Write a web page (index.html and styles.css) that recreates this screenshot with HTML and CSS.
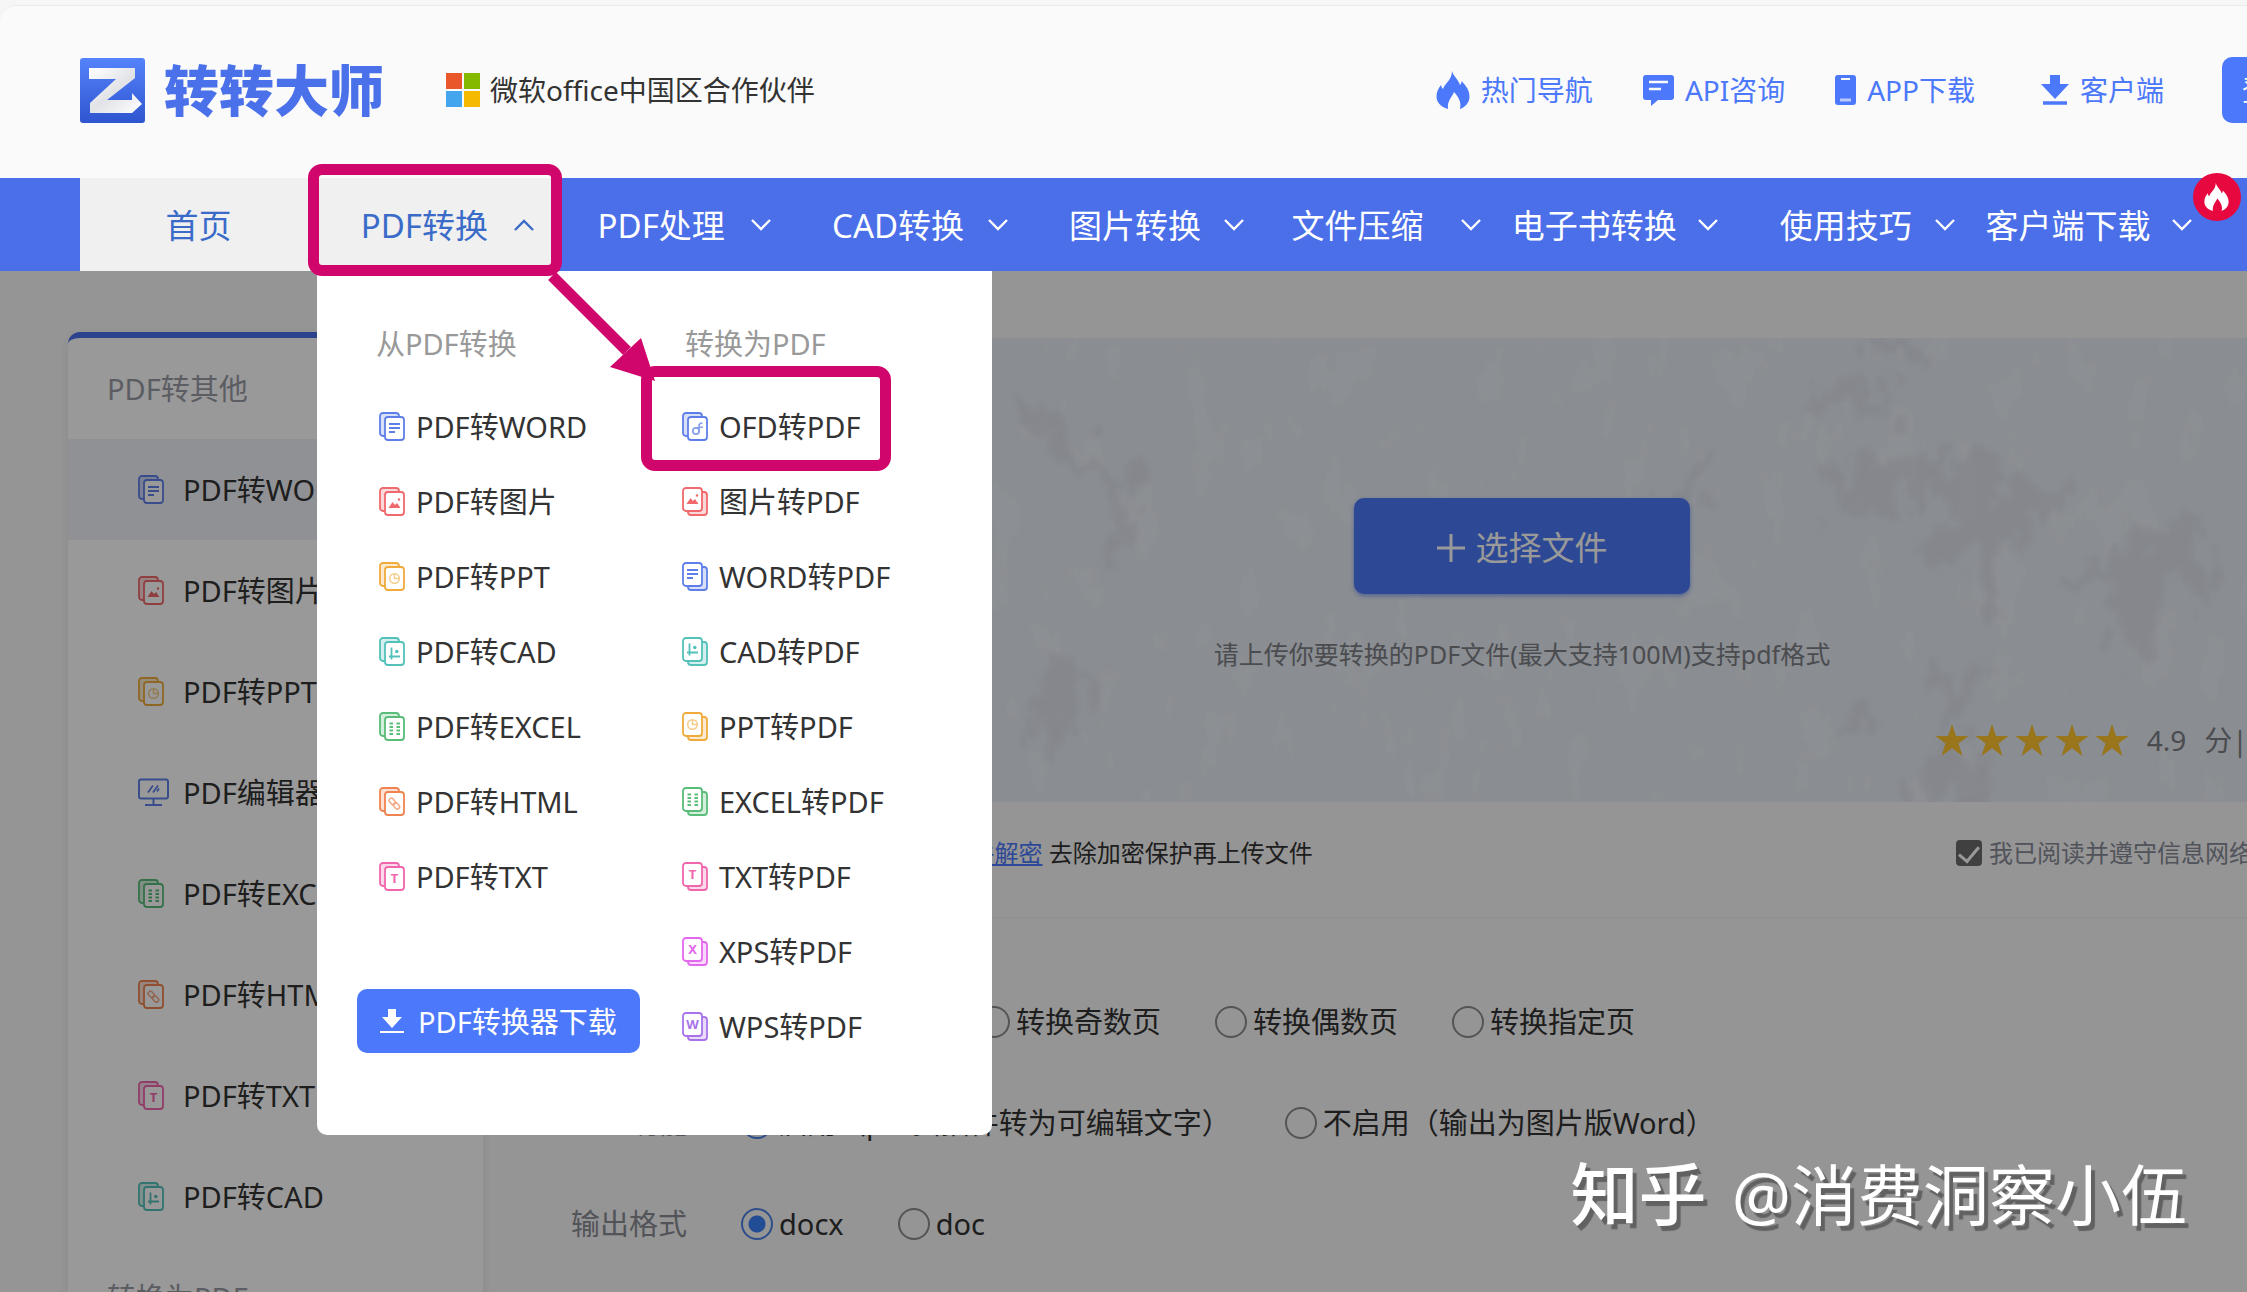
FILE: index.html
```html
<!DOCTYPE html>
<html lang="zh-CN">
<head>
    <meta charset="UTF-8">
    <meta name="viewport" content="width=device-width, initial-scale=1.0">
    <title>转转大师 - PDF转换</title>
    <link rel="stylesheet" href="styles.css">
</head>
<body>
    <!-- shared icon shapes -->
    <svg class="sprite" aria-hidden="true">
        <defs>
            <linearGradient id="logo-bg" x1="0" y1="0" x2="0" y2="1">
                <stop offset="0" stop-color="#5583fb"/>
                <stop offset="1" stop-color="#2e55cf"/>
            </linearGradient>
            <linearGradient id="logo-z" x1="0" y1="0" x2="1" y2="1">
                <stop offset="0" stop-color="#fff"/>
                <stop offset=".5" stop-color="#e2e3e7"/>
                <stop offset="1" stop-color="#fff"/>
            </linearGradient>
        </defs>
        <symbol id="page-from" viewBox="0 0 26 29">
            <rect x="1" y="1" width="19" height="23" rx="3" fill="currentColor" fill-opacity=".25" stroke="currentColor" stroke-width="1.8"/>
            <rect x="6" y="5" width="19" height="23" rx="3" fill="#fff" stroke="currentColor" stroke-width="1.8"/>
        </symbol>
        <symbol id="page-to" viewBox="0 0 26 29">
            <rect x="6" y="5" width="19" height="23" rx="3" fill="currentColor" fill-opacity=".25" stroke="currentColor" stroke-width="1.8"/>
            <rect x="1" y="1" width="19" height="23" rx="3" fill="#fff" stroke="currentColor" stroke-width="1.8"/>
        </symbol>
        <g id="g-word" stroke="currentColor" stroke-width="1.800"><path d="M10 12h11M10 16h11M10 20h6"/></g>
        <g id="g-image" fill="currentColor"><path d="M9.500 21l4-6 2.500 3 2-2 3.500 5z"/><circle cx="20" cy="12.500" r="1.200"/></g>
        <g id="g-ppt" fill="none" stroke="currentColor" stroke-width="1.500" opacity=".6"><circle cx="15.500" cy="16.500" r="4.800"/><path d="M15.500 12v4.500h4.500"/></g>
        <g id="g-cad" fill="none" stroke="currentColor" stroke-width="1.800"><path d="M12.500 10.500v12M10 19.500h11"/><circle cx="17.800" cy="14.500" r="1.800" fill="currentColor" stroke="none"/></g>
        <g id="g-excel" stroke="currentColor" stroke-width="1.800"><path d="M10.500 11.500h3.500M17.500 11.500h3.500M10.500 15h3.500M17.500 15h3.500M10.500 18.500h3.500M17.500 18.500h3.500M10.500 22h3.500M17.500 22h3.500"/></g>
        <g id="g-html" fill="none" stroke="currentColor" stroke-width="1.500" opacity=".7"><rect x="-3.500" y="-2" width="7" height="4.400" rx="2" transform="translate(13.400 14.300) rotate(48)"/><rect x="-3.500" y="-2" width="7" height="4.400" rx="2" transform="translate(17.600 18.800) rotate(48)"/></g>
        <g id="g-ofd" fill="none" stroke="currentColor" stroke-width="1.700" opacity=".75"><circle cx="14" cy="19" r="3.200"/><path d="M17 20v-6q0-3 3.500-3M14 16l7-1"/></g>
        <symbol id="chevron" viewBox="0 0 22 14"><path d="M2 2l9 9 9-9" fill="none" stroke="currentColor" stroke-width="2.400"/></symbol>
        <symbol id="flame" viewBox="0 0 34 38"><path d="M16 0c1 5 7 9 8 14 1-1 1.500-2 1.500-4 5 5 8 10 8 15.500 0 6-4 10.500-9.500 12.500 1.500-6-1-12-6-17-1 4-7 8-6 17C4.500 36 .5 31 .5 25.500c0-5 2-8 4.500-11.500.5 2 1 3 2 4C9 12 16 9 16 0z" fill="currentColor"/></symbol>
        <symbol id="star" viewBox="0 0 34 32"><path d="M17 0l4 12h12.500l-10 7.500L27.500 32 17 24.300 6.500 32l4-12.500L.5 12H13z" fill="currentColor"/></symbol>
    </svg>

    <div class="app">
        <header class="header">
            <a class="logo" href="#">
                <svg class="logo-mark" viewBox="0 0 65 65">
                    <rect width="65" height="65" rx="3" fill="url(#logo-bg)"/>
                    <path d="M9 10h46v10L27 42h25v-7l10 11-10 9H10V45l26-24H9z" fill="url(#logo-z)"/>
                </svg>
                <span>转转大师</span>
            </a>
            <div class="partner">
                <svg class="ms-mark" viewBox="0 0 34 34">
                    <path fill="#e8562a" d="M0 0h16v16H0z"/>
                    <path fill="#84b900" d="M18 0h16v16H18z"/>
                    <path fill="#43a5ee" d="M0 18h16v16H0z"/>
                    <path fill="#f4b900" d="M18 18h16v16H18z"/>
                </svg>
                <span>微软office中国区合作伙伴</span>
            </div>
            <div class="quick-links">
                <a href="#"><svg width="34" height="38"><use href="#flame"/></svg>热门导航</a>
                <a href="#">
                    <svg width="31" height="31" viewBox="0 0 31 31"><path d="M3 0h25q3 0 3 3v19q0 3-3 3H15l-7 6v-6H3q-3 0-3-3V3q0-3 3-3z" fill="currentColor"/><path d="M6 7h19M6 14h12" stroke="#fafafa" stroke-width="2.500"/></svg>API咨询
                </a>
                <a href="#">
                    <svg width="21" height="30" viewBox="0 0 21 30"><rect width="21" height="30" rx="3" fill="currentColor"/><path d="M6 4h9" stroke="#fafafa" stroke-width="2"/><path d="M5 25h11" stroke="#b9c9fb" stroke-width="3"/></svg>APP下载
                </a>
                <a class="client-link" href="#">
                    <svg width="28" height="30" viewBox="0 0 28 30"><path d="M9 0h10v9h9L14 24 0 9h9z" fill="currentColor"/><path d="M2 28h24" stroke="currentColor" stroke-width="3.500"/></svg>客户端
                </a>
                <button class="login" type="button">登录/注册</button>
            </div>
        </header>

        <nav class="nav">
            <a class="nav-item home" href="#">首页</a>
            <div class="nav-item open">
                <a href="#">PDF转换</a>
                <svg class="chevron up"><use href="#chevron"/></svg>
                <div class="menu">
                    <div class="menu-col">
                        <h3>从PDF转换</h3>
                        <a href="#"><svg class="doc blue"><use href="#page-from"/><use href="#g-word"/></svg>PDF转WORD</a>
                        <a href="#"><svg class="doc red"><use href="#page-from"/><use href="#g-image"/></svg>PDF转图片</a>
                        <a href="#"><svg class="doc amber"><use href="#page-from"/><use href="#g-ppt"/></svg>PDF转PPT</a>
                        <a href="#"><svg class="doc teal"><use href="#page-from"/><use href="#g-cad"/></svg>PDF转CAD</a>
                        <a href="#"><svg class="doc green"><use href="#page-from"/><use href="#g-excel"/></svg>PDF转EXCEL</a>
                        <a href="#"><svg class="doc orange"><use href="#page-from"/><use href="#g-html"/></svg>PDF转HTML</a>
                        <a href="#"><svg class="doc pink"><use href="#page-from"/><text class="glyph" x="15.500" y="21">T</text></svg>PDF转TXT</a>
                        <button class="download" type="button">
                            <svg width="24" height="25" viewBox="0 0 24 25"><path d="M8 0h8v8h6L12 19 2 8h6z" fill="#fff"/><path d="M0 23h24" stroke="#fff" stroke-width="2"/></svg>PDF转换器下载
                        </button>
                    </div>
                    <div class="menu-col to">
                        <h3>转换为PDF</h3>
                        <a class="marked" href="#"><svg class="doc blue"><use href="#page-from"/><use href="#g-ofd"/></svg>OFD转PDF</a>
                        <a href="#"><svg class="doc red"><use href="#page-to"/><use href="#g-image" x="-5" y="-4"/></svg>图片转PDF</a>
                        <a href="#"><svg class="doc blue"><use href="#page-to"/><use href="#g-word" x="-5" y="-4"/></svg>WORD转PDF</a>
                        <a href="#"><svg class="doc teal"><use href="#page-to"/><use href="#g-cad" x="-5" y="-4"/></svg>CAD转PDF</a>
                        <a href="#"><svg class="doc amber"><use href="#page-to"/><use href="#g-ppt" x="-5" y="-4"/></svg>PPT转PDF</a>
                        <a href="#"><svg class="doc green"><use href="#page-to"/><use href="#g-excel" x="-5" y="-4"/></svg>EXCEL转PDF</a>
                        <a href="#"><svg class="doc pink"><use href="#page-to"/><text class="glyph" x="10.500" y="17">T</text></svg>TXT转PDF</a>
                        <a href="#"><svg class="doc magenta"><use href="#page-to"/><text class="glyph" x="10.500" y="17">X</text></svg>XPS转PDF</a>
                        <a href="#"><svg class="doc purple"><use href="#page-to"/><text class="glyph" x="10.500" y="17">W</text></svg>WPS转PDF</a>
                    </div>
                    <svg class="arrow" viewBox="0 0 112 112">
                        <path d="M5 5l75 75" stroke="#d1066c" stroke-width="11"/>
                        <path d="M108 110L63 96l31-29z" fill="#d1066c"/>
                    </svg>
                </div>
            </div>
            <div class="nav-item"><a href="#">PDF处理</a><svg class="chevron"><use href="#chevron"/></svg></div>
            <div class="nav-item"><a href="#">CAD转换</a><svg class="chevron"><use href="#chevron"/></svg></div>
            <div class="nav-item"><a href="#">图片转换</a><svg class="chevron"><use href="#chevron"/></svg></div>
            <div class="nav-item tight"><a href="#">文件压缩</a><svg class="chevron"><use href="#chevron"/></svg></div>
            <div class="nav-item tight"><a href="#">电子书转换</a><svg class="chevron"><use href="#chevron"/></svg></div>
            <div class="nav-item"><a href="#">使用技巧</a><svg class="chevron"><use href="#chevron"/></svg></div>
            <div class="nav-item tight">
                <a href="#">客户端下载</a><svg class="chevron"><use href="#chevron"/></svg>
                <span class="hot"><svg width="25" height="28"><use href="#flame"/></svg></span>
            </div>
        </nav>

        <main class="main">
            <aside class="sidebar">
                <h2>PDF转其他</h2>
                <a class="active" href="#"><svg class="doc blue"><use href="#page-from"/><use href="#g-word"/></svg>PDF转WORD</a>
                <a href="#"><svg class="doc red"><use href="#page-from"/><use href="#g-image"/></svg>PDF转图片</a>
                <a href="#"><svg class="doc amber"><use href="#page-from"/><use href="#g-ppt"/></svg>PDF转PPT</a>
                <a href="#"><svg class="doc blue" viewBox="0 0 31 28"><path d="M3 1h25q2 0 2 2v15q0 2-2 2H3q-2 0-2-2V3q0-2 2-2zM15.500 20v6M7 26.500h17" fill="none" stroke="currentColor" stroke-width="2"/><path d="M10 14l5-7M15 14l5-7M19 13l2-3" stroke="currentColor" stroke-width="1.800"/></svg>PDF编辑器</a>
                <a href="#"><svg class="doc green"><use href="#page-from"/><use href="#g-excel"/></svg>PDF转EXCEL</a>
                <a href="#"><svg class="doc orange"><use href="#page-from"/><use href="#g-html"/></svg>PDF转HTML</a>
                <a href="#"><svg class="doc pink"><use href="#page-from"/><text class="glyph" x="15.500" y="21">T</text></svg>PDF转TXT</a>
                <a href="#"><svg class="doc teal"><use href="#page-from"/><use href="#g-cad"/></svg>PDF转CAD</a>
                <h2>转换为PDF</h2>
            </aside>

            <section class="panel">
                <div class="upload">
                    <!-- brushed paint marks behind the upload button -->
                    <svg class="texture" aria-hidden="true">
                        <filter id="rough" x="-10%" y="-10%" width="120%" height="120%">
                            <feTurbulence type="fractalNoise" baseFrequency=".04 .02" numOctaves="5" seed="4"/>
                            <feDisplacementMap in="SourceGraphic" scale="90" xChannelSelector="R" yChannelSelector="G"/>
                            <feGaussianBlur stdDeviation="2"/>
                        </filter>
                        <filter id="specks" x="0" y="0" width="100%" height="100%">
                            <feTurbulence type="fractalNoise" baseFrequency=".03 .014" numOctaves="5" seed="11"/>
                            <feColorMatrix values="0 0 0 0 .85  0 0 0 0 .88  0 0 0 0 .93  12 0 0 0 -7.200"/>
                        </filter>
                        <rect width="100%" height="100%" filter="url(#specks)" opacity=".6"/>
                        <g fill="#dce0ea" filter="url(#rough)" opacity=".75">
                            <path d="M1325 48h80l10 30 -20 12 -10 -18 -60 -2z"/>
                            <path d="M1365 5h60v28h-50z"/>
                            <path d="M1380 118h125l10 22 65 12 -12 40 -40 6 -10 40 -15 40 -20 -44 -50 -10 -8 -30 50 -10 0 -20 -60 -8 -30 10 -36 6 -10 -36z"/>
                            <path d="M1560 225h60l30 -40h60l20 40 -5 60 -20 -40 -30 10 -20 80 -10 -10 -30 -40 15 -40 -60 0z"/>
                            <path d="M1450 335h30l-5 60 -20 10zM1430 415h80l-10 50h-70z"/>
                            <path d="M1190 130h30l-8 40h-34zM1345 370h40v20h-36z"/>
                            <path d="M530 60h30l50 60 40 30 -10 70 -20 -10 -10 -70 -60 -40z"/>
                            <path d="M540 330h60l-10 40 -20 60 -20 -10 10 -60z"/>
                        </g>
                    </svg>
                    <button class="choose" type="button">
                        <svg width="28" height="28" viewBox="0 0 28 28"><path d="M14 0v28M0 14h28" stroke="currentColor" stroke-width="3"/></svg>选择文件
                    </button>
                    <p class="hint">请上传你要转换的PDF文件(最大支持100M)支持pdf格式</p>
                    <div class="rating">
                        <span class="stars">
                            <svg><use href="#star"/></svg>
                            <svg><use href="#star"/></svg>
                            <svg><use href="#star"/></svg>
                            <svg><use href="#star"/></svg>
                            <svg><use href="#star"/></svg>
                        </span>
                        <span>4.9</span>
                        <span>分| 评分</span>
                    </div>
                </div>
                <div class="notice">
                    <p>如上传的PDF文件已加密，请先使用<a href="#">文件解密</a> 去除加密保护再上传文件</p>
                    <label class="agree"><input type="checkbox" checked>我已阅读并遵守信息网络传输协议</label>
                </div>
                <form class="options">
                    <div class="option-row">
                        <span class="option-name">转换页码</span>
                        <label><input type="radio" name="pages" checked>转换所有页</label>
                        <label><input type="radio" name="pages">转换奇数页</label>
                        <label><input type="radio" name="pages">转换偶数页</label>
                        <label><input type="radio" name="pages">转换指定页</label>
                    </div>
                    <div class="option-row">
                        <span class="option-name">OCR功能</span>
                        <label><input type="radio" name="ocr" checked>启用（pdf扫描件转为可编辑文字）</label>
                        <label><input type="radio" name="ocr">不启用（输出为图片版Word）</label>
                    </div>
                    <div class="option-row">
                        <span class="option-name">输出格式</span>
                        <label><input type="radio" name="format" checked>docx</label>
                        <label><input type="radio" name="format">doc</label>
                    </div>
                </form>
            </section>
            <div class="mask"></div>
        </main>

        <p class="watermark"><b>知乎</b> @消费洞察小伍</p>
    </div>
</body>
</html>
```

FILE: styles.css
```css
* {
    box-sizing: border-box;
}
body {
    margin: 0;
    background: #f9f9f9;
    font-family: "Noto Sans", "Noto Sans CJK SC", sans-serif;
    font-size: 28px;
    line-height: 40px;
    color: #333;
}
h2, h3, p {
    margin: 0;
    font-weight: normal;
}
a {
    color: inherit;
    text-decoration: none;
}
button, input {
    font: inherit;
    margin: 0;
}
svg {
    flex: none;
}
.sprite {
    position: absolute;
    width: 0;
    height: 0;
}
.app {
    position: relative;
    height: 100vh;
    overflow: hidden;
    display: flex;
    flex-direction: column;
    background: #f6f6f6;
}

/* header */
.header {
    display: flex;
    align-items: center;
    height: 173px;
    flex: none;
    margin-top: 5px;
    padding: 0 0 4px 80px;
    background: #fafafa;
    border-top: 1px solid #ebebeb;
    border-top-left-radius: 16px;
    white-space: nowrap;
}
.logo {
    display: flex;
    align-items: center;
    gap: 19px;
    font-size: 55px;
    line-height: 64px;
    font-weight: 900;
    color: #4a70ea;
}
.logo-mark {
    width: 65px;
    height: 65px;
}
.partner {
    display: flex;
    align-items: center;
    gap: 10px;
    margin-left: 62px;
}
.ms-mark {
    width: 34px;
    height: 34px;
}
.quick-links {
    display: flex;
    align-items: center;
    gap: 50px;
    margin-left: auto;
    margin-right: -145px;
    color: #4c78fb;
}
.quick-links a {
    display: flex;
    align-items: center;
    gap: 11px;
}
.quick-links .client-link {
    margin: 0 8px 0 16px;
}
.login {
    width: 170px;
    height: 66px;
    padding: 0 20px;
    border: 0;
    border-radius: 10px;
    background: #4c78fb;
    color: #fff;
    text-align: left;
}

/* navigation */
.nav {
    position: relative;
    z-index: 2;
    display: grid;
    grid-template-columns: repeat(9, 1fr);
    height: 93px;
    flex: none;
    padding: 0 35px 0 80px;
    background: #4a6fe9;
    color: #fff;
    font-size: 33px;
    white-space: nowrap;
}
.nav-item {
    position: relative;
    display: flex;
    align-items: center;
    padding: 0 19px;
}
.nav-item > a {
    flex: 1;
    padding-top: 3px;
    text-align: center;
}
.nav-item.tight {
    padding-left: 0;
}
.nav-item.tight > a {
    padding-right: 10px;
}
.nav-item.home {
    justify-content: center;
    padding: 3px 0 0;
}
.nav-item.home,
.nav-item.open {
    background: #f0f0f0;
    color: #3a6bc9;
}
.nav-item.open::after,
.marked::after {
    content: "";
    position: absolute;
    border: 11px solid #d1066c;
    border-radius: 14px;
}
.nav-item.open::after {
    inset: -14px -8px -5px -9px;
}
.chevron {
    width: 22px;
    height: 14px;
}
.chevron.up {
    transform: rotate(180deg);
}
.hot {
    position: absolute;
    top: -5px;
    right: -29px;
    display: flex;
    align-items: center;
    justify-content: center;
    width: 48px;
    height: 48px;
    border-radius: 50%;
    background: #e6083f;
}

/* drop-down */
.menu {
    position: absolute;
    top: 100%;
    left: 0;
    display: flex;
    gap: 42px;
    width: 675px;
    padding: 35px 27px 71px 40px;
    background: #fff;
    border-radius: 0 0 10px 10px;
    color: #333;
    font-size: 29px;
}
.menu-col {
    width: 283px;
}
.menu h3 {
    margin-bottom: 8px;
    padding-left: 19px;
    font-size: 29px;
    line-height: 75px;
    color: #999;
}
.menu a {
    position: relative;
    display: flex;
    align-items: center;
    gap: 11px;
    height: 75px;
    padding-left: 22px;
}
.menu .to a {
    padding-left: 0;
}
.menu .to h3 {
    padding-left: 3px;
}
.marked::after {
    inset: -23px 74px -7px -41px;
}
.arrow {
    position: absolute;
    top: 0;
    left: 230px;
    width: 112px;
    height: 112px;
}
.download {
    display: flex;
    align-items: center;
    justify-content: center;
    gap: 14px;
    width: 100%;
    height: 64px;
    margin-top: 75px;
    padding-top: 2px;
    border: 0;
    border-radius: 10px;
    background: #4c78fb;
    color: #fff;
}
.doc {
    width: 26px;
    height: 29px;
}
.doc use {
    width: 26px;
    height: 29px;
}
.glyph {
    font: bold 13px "Noto Sans", sans-serif;
    text-anchor: middle;
    fill: currentColor;
}
.blue { color: #5f7fe8; }
.red { color: #f0696c; }
.amber { color: #f0ab3c; }
.teal { color: #53c1b9; }
.green { color: #58bd79; }
.orange { color: #f08350; }
.pink { color: #f067ae; }
.magenta { color: #e468ee; }
.purple { color: #a873ea; }
.menu a,
.sidebar a {
    color: #333;
}

/* page body under the mask */
.main {
    position: relative;
    flex: 1;
    display: flex;
    align-items: flex-start;
    gap: 5px;
    min-height: 0;
    margin-right: -309px;
    padding: 61px 0 0 68px;
    background: #f9f9f9;
}
.mask {
    position: absolute;
    inset: 0;
    background: rgba(0, 0, 0, 0.4);
}
.sidebar {
    flex: none;
    width: 415px;
    background: #fff;
    border-top: 6px solid #4a6fe9;
    border-radius: 12px 12px 0 0;
    box-shadow: 0 4px 12px rgba(0, 0, 0, 0.08);
    font-size: 29px;
}
.sidebar h2 {
    padding-left: 39px;
    font-size: 29px;
    line-height: 101px;
    color: #999ca6;
}
.sidebar a {
    display: flex;
    align-items: center;
    gap: 19px;
    height: 101px;
    padding-left: 70px;
}
.sidebar .active {
    background: #f0f2f8;
}
.sidebar [viewBox] {
    width: 31px;
    margin-right: -5px;
}
.panel {
    flex: 1;
    margin-top: 6px;
}
.upload {
    position: relative;
    display: flex;
    flex-direction: column;
    align-items: center;
    height: 464px;
    padding-top: 160px;
    background: #e6ebf2;
}
.texture {
    position: absolute;
    width: 100%;
    height: 100%;
    top: 0;
    left: 0;
}
.choose {
    position: relative;
    display: flex;
    align-items: center;
    justify-content: center;
    gap: 11px;
    width: 336px;
    height: 96px;
    padding-top: 4px;
    border: 0;
    border-radius: 10px;
    background: #4c78f7;
    box-shadow: 0 2px 4px rgba(76, 120, 247, 0.6);
    color: #fff;
    font-size: 33px;
}
.hint {
    position: relative;
    margin-top: 40px;
    font-size: 25px;
    color: #7d7f85;
}
.rating {
    position: relative;
    display: flex;
    align-items: center;
    align-self: flex-end;
    gap: 18px;
    margin-top: 46px;
    padding-right: 245px;
    color: #7d7f85;
}
.stars {
    display: flex;
    gap: 6px;
    color: #ffc52d;
}
.stars svg {
    width: 34px;
    height: 32px;
}
.notice {
    display: flex;
    justify-content: space-between;
    align-items: center;
    height: 116px;
    padding: 0 207px 13px 78px;
    border-bottom: 1px solid #eee;
    font-size: 24px;
}
.notice a {
    color: #4c78fb;
    text-decoration: underline;
}
.agree {
    display: flex;
    align-items: center;
    gap: 7px;
    color: #888a98;
}
.agree input {
    appearance: none;
    display: flex;
    justify-content: center;
    width: 26px;
    height: 26px;
    border-radius: 4px;
    background: #6c6c6c;
}
.agree input::after {
    content: "";
    width: 9px;
    height: 17px;
    margin-top: 2px;
    border: solid #fff;
    border-width: 0 3px 3px 0;
    transform: rotate(40deg);
}
.options {
    padding: 53px 0 0 83px;
    font-size: 29px;
}
.option-row {
    display: flex;
    align-items: center;
    gap: 54px;
    height: 101px;
    white-space: nowrap;
}
.option-name {
    width: 116px;
    color: #8a8c94;
}
.option-row label {
    display: flex;
    align-items: center;
    gap: 6px;
}
.option-row input {
    appearance: none;
    width: 32px;
    height: 32px;
    border: 2px solid #8c8c8c;
    border-radius: 50%;
}
.option-row input:checked {
    border-color: #4c7fe6;
    background: radial-gradient(circle, #3a80f8 8px, transparent 9px);
}

.watermark {
    position: absolute;
    right: 60px;
    bottom: 50px;
    z-index: 3;
    font-size: 66px;
    line-height: 96px;
    color: #fff;
    text-shadow: 4px 5px 1px rgba(0, 0, 0, 0.35);
}
.watermark b {
    margin-right: 8px;
    font-size: 68px;
    font-weight: 500;
}
```
